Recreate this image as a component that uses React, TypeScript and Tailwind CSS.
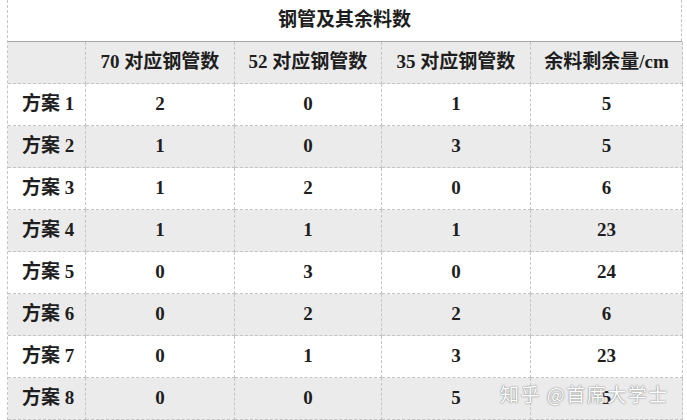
import React from "react";

const rows = [
  ["方案 1", "2", "0", "1", "5"],
  ["方案 2", "1", "0", "3", "5"],
  ["方案 3", "1", "2", "0", "6"],
  ["方案 4", "1", "1", "1", "23"],
  ["方案 5", "0", "3", "0", "24"],
  ["方案 6", "0", "2", "2", "6"],
  ["方案 7", "0", "1", "3", "23"],
  ["方案 8", "0", "0", "5", "5"],
];

const font = { fontFamily: '"Liberation Serif", "Noto Sans CJK SC", serif' };

export default function App() {
  return (
    <div className="relative w-[687px] h-[420px] overflow-hidden bg-white text-[#1e1e1e]" style={font}>
      <div className="ml-[7px] w-[675px] border-l border-dashed border-[#c4c4c4]">
        <div className="h-[41px] flex items-center justify-center border-r border-dashed border-[#c4c4c4] font-bold text-[19px]">
          钢管及其余料数
        </div>
        <div className="grid grid-cols-[78px_149px_147px_149px_152px] border-t border-[#a6a6a6]">
          {["", "70 对应钢管数", "52 对应钢管数", "35 对应钢管数", "余料剩余量/cm"].map((h, i) => (
            <div
              key={i}
              className="h-[42px] bg-[#ebebeb] flex items-center justify-center border-r border-b border-dashed border-[#c4c4c4] font-bold text-[19px]"
            >
              {h}
            </div>
          ))}
          {rows.map((r, ri) =>
            r.map((c, ci) => (
              <div
                key={`${ri}-${ci}`}
                className={`h-[42px] flex items-center ${ci === 0 ? "justify-start pl-[14px]" : "justify-center"} border-r border-b border-dashed border-[#c4c4c4] font-bold text-[19px] ${ri % 2 === 1 ? "bg-[#ebebeb]" : "bg-white"}`}
              >
                {c}
              </div>
            ))
          )}
        </div>
      </div>
      <div
        className="absolute left-[500px] top-[380px] text-white text-[19px] tracking-[1.5px] [text-shadow:0_0_1px_#777,0_0_2px_#999]"
        style={{ fontFamily: '"Noto Sans CJK SC", sans-serif' }}
      >
        知乎 @首席大学士
      </div>
    </div>
  );
}
